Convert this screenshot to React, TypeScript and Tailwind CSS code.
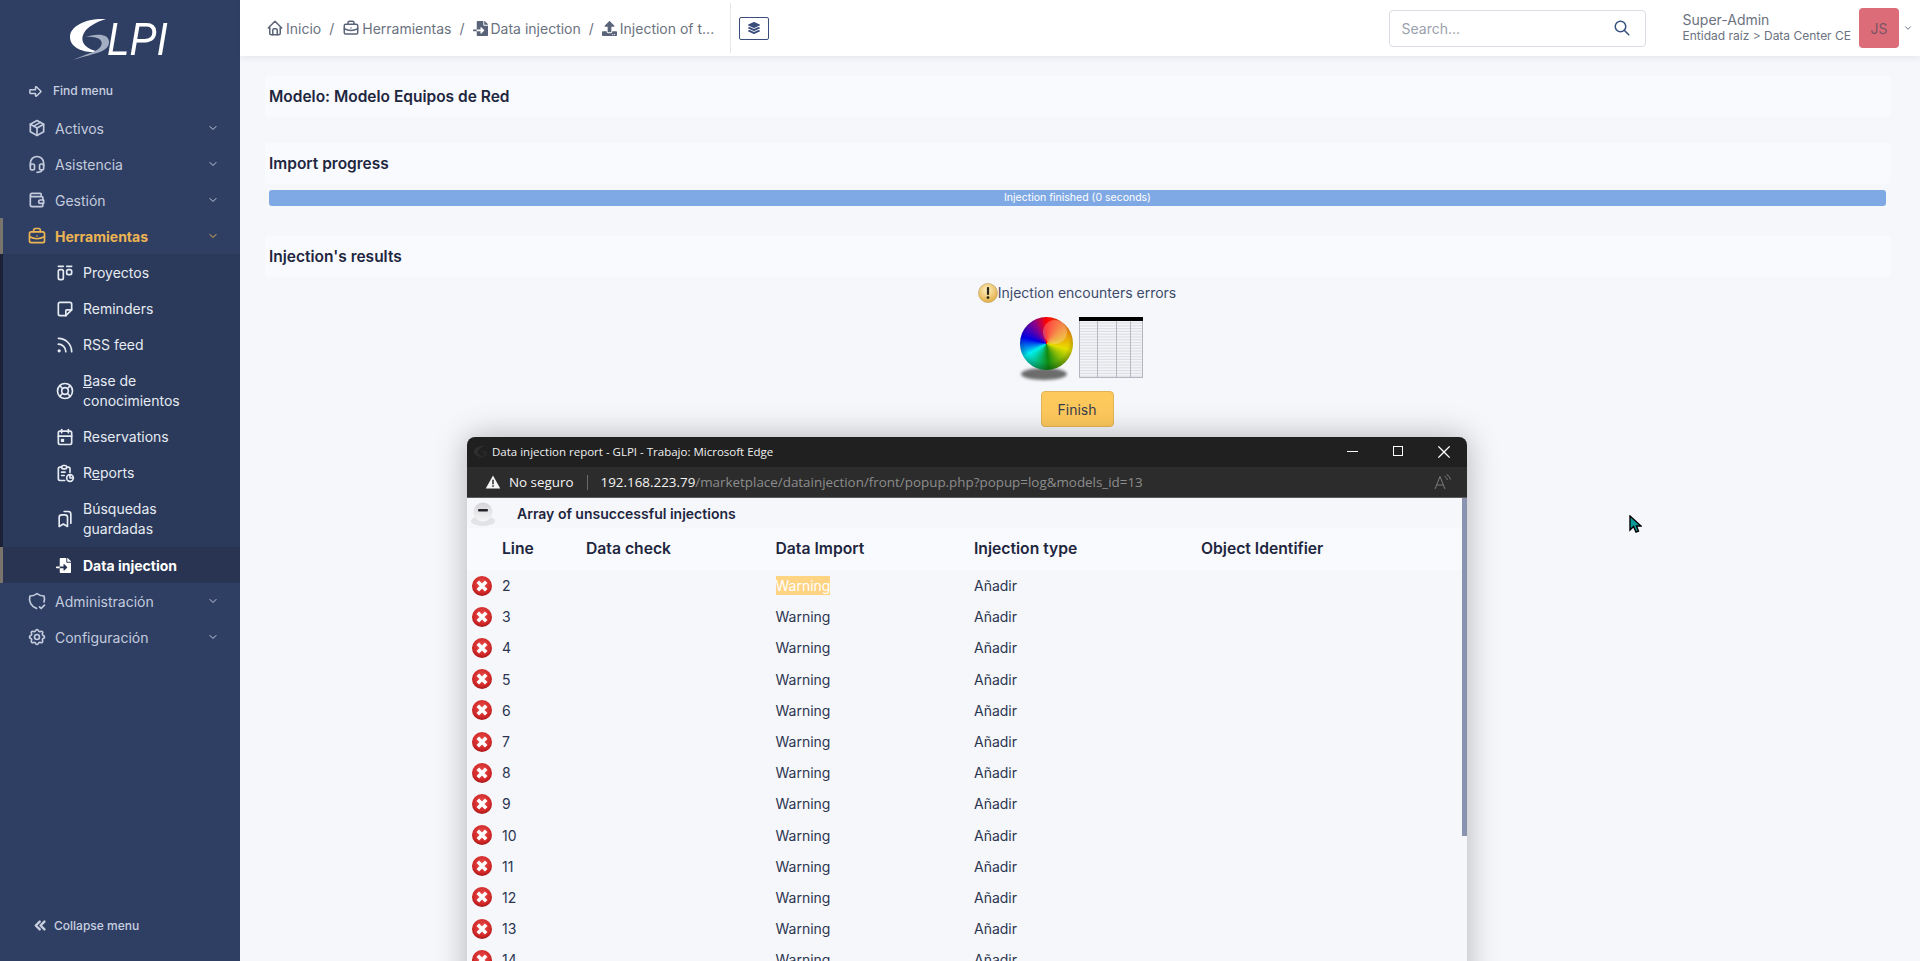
import type { ReactNode } from 'react';
import {
  TbArrowBigRight,
  TbBookmarks,
  TbBriefcase,
  TbCalendarEvent,
  TbChevronDown,
  TbChevronsLeft,
  TbHeadset,
  TbHome,
  TbLayoutKanban,
  TbLifebuoy,
  TbNote,
  TbPackage,
  TbReport,
  TbRss,
  TbSearch,
  TbSettings,
  TbShieldCheck,
  TbWallet,
} from 'react-icons/tb';
import { FaFileImport, FaLayerGroup, FaUpload } from 'react-icons/fa';
import { VscChromeClose, VscChromeMaximize, VscChromeMinimize } from 'react-icons/vsc';

const rows = ['2', '3', '4', '5', '6', '7', '8', '9', '10', '11', '12', '13', '14'];

function GlpiMark({ className, dark }: { className: string; dark?: boolean }) {
  return (
    <svg viewBox="68 18 44 45" className={className}>
      <path
        d="M106 20C86 19 70 27 70 38C70 47 80 53 93 53L101 53C86 51 79 43 84 34C87 28 96 23 106 20Z"
        fill={dark ? '#2e2e2e' : '#ffffff'}
      />
      <path
        d="M73 61C85 55 98 53 101 47C104 41 98 37 85 38C94 35 110 33 109 44C108 54 90 55 73 61Z"
        fill={dark ? '#2a2a2a' : '#a4aec2'}
      />
    </svg>
  );
}

function MenuItem({ icon, label, active }: { icon: ReactNode; label: string; active?: boolean }) {
  return (
    <div className={`flex h-9 items-center pl-[27px] pr-[21px] ${active ? 'font-bold text-[#edb452]' : 'text-[#c3cbdd]'}`}>
      <span className="flex w-[28px] text-[20px]">{icon}</span>
      <span className="flex-1 text-[14px]">{label}</span>
      <TbChevronDown className="text-[12px]" />
    </div>
  );
}

function SubItem({ icon, children }: { icon: ReactNode; children: ReactNode }) {
  return (
    <div className="flex min-h-9 items-center py-[8px] pl-[55px] pr-4 text-[14px] leading-[20px] text-[#e6ebf3]">
      <span className="flex w-[28px] shrink-0 text-[20px]">{icon}</span>
      <span>{children}</span>
    </div>
  );
}

function Sidebar() {
  return (
    <aside className="flex h-full w-[240px] shrink-0 flex-col bg-[#2f3f64]">
      <div className="flex h-[75px] items-start pl-[68px] pt-[17px]">
        <GlpiMark className="h-[45px] w-[44px]" />
        <span className="-ml-[5px] origin-left scale-x-[0.88] font-['Liberation_Sans',sans-serif] text-[46px] italic leading-[44px] text-white">LPI</span>
      </div>
      <div className="flex h-[32px] items-center pl-[28px] text-[12px] font-medium text-[#c8d0e0]">
        <TbArrowBigRight className="mr-[10px] text-[15px]" strokeWidth={2.4} />
        Find menu
      </div>
      <div className="mt-[3px]">
        <MenuItem icon={<TbPackage />} label="Activos" />
        <MenuItem icon={<TbHeadset />} label="Asistencia" />
        <MenuItem icon={<TbWallet />} label="Gestión" />
        <div className="border-l-[3px] border-[#7a756c]">
          <div className="-ml-[3px]">
            <MenuItem icon={<TbBriefcase />} label="Herramientas" active />
          </div>
        </div>
        <div className="border-l-[3px] border-[#1a2138] bg-[#2b3a5a] pt-[1px]">
          <div className="-ml-[3px]">
            <SubItem icon={<TbLayoutKanban />}>Proyectos</SubItem>
            <SubItem icon={<TbNote />}>Reminders</SubItem>
            <SubItem icon={<TbRss />}>RSS feed</SubItem>
            <SubItem icon={<TbLifebuoy />}>
              <u>B</u>ase de conocimientos
            </SubItem>
            <SubItem icon={<TbCalendarEvent />}>Reservations</SubItem>
            <SubItem icon={<TbReport />}>
              R<u>e</u>ports
            </SubItem>
            <SubItem icon={<TbBookmarks />}>Búsquedas guardadas</SubItem>
          </div>
        </div>
        <div className="flex h-9 items-center border-l-[3px] border-[#7a756c] bg-[#283451] pl-[52px] text-[14px] font-bold text-white">
          <FaFileImport className="mr-[11px] w-[17px] text-[15px]" />
          Data injection
        </div>
        <MenuItem icon={<TbShieldCheck />} label="Administración" />
        <MenuItem icon={<TbSettings />} label="Configuración" />
      </div>
      <div className="mt-auto flex items-center pb-[26px] pl-[31px] text-[12px] font-medium text-[#c8d0e0]">
        <TbChevronsLeft className="mr-[4px] text-[19px]" strokeWidth={3} />
        Collapse menu
      </div>
    </aside>
  );
}

function Crumb({ icon, label }: { icon: ReactNode; label: string }) {
  return (
    <span className="flex items-center gap-[2px]">
      <span className="flex text-[18px] text-[#5a6478]">{icon}</span>
      {label}
    </span>
  );
}

function Header() {
  return (
    <header className="relative flex h-14 shrink-0 items-center bg-white pl-[26px] pr-[7px] text-[14px] text-[#6b7280] shadow-[0_2px_6px_rgba(40,50,80,0.08)]">
      <div className="flex items-center gap-[8px]">
        <Crumb icon={<TbHome />} label="Inicio" />
        <span>/</span>
        <Crumb icon={<TbBriefcase />} label="Herramientas" />
        <span>/</span>
        <Crumb icon={<FaFileImport className="mr-[1px] text-[15px]" />} label="Data injection" />
        <span>/</span>
        <Crumb icon={<FaUpload className="mr-[1px] text-[15px]" />} label="Injection of t..." />
      </div>
      <div className="ml-[16px] h-[50px] border-l border-[#e4e7ec]" />
      <div className="ml-[8px] flex h-[23px] w-[30px] items-center justify-center rounded-[2px] border border-[#3a4d7c] text-[12px] text-[#3a4d7c]">
        <FaLayerGroup />
      </div>
      <div className="ml-auto flex h-[37px] w-[257px] items-center justify-between rounded-[4px] border border-[#d9dde5] pl-3 pr-[14px] text-[#9aa1ad]">
        Search...
        <TbSearch className="text-[18px] text-[#35507f]" />
      </div>
      <div className="ml-[37px] flex flex-col leading-[16px]">
        <span className="text-[14px]">Super-Admin</span>
        <span className="text-[12px]">Entidad raíz &gt; Data Center CE</span>
      </div>
      <div className="ml-[8px] flex h-10 w-10 items-center justify-center rounded-[4px] bg-[#db6c78] text-[14px] text-[#7c5566]">JS</div>
      <TbChevronDown className="ml-[4px] text-[10px] text-[#4b5563]" />
    </header>
  );
}

function CardTitle({ children }: { children: ReactNode }) {
  return (
    <div className="flex h-[41px] items-center rounded-[2px] bg-[#f9fafd] px-1 text-[15.5px] font-semibold text-[#1e2640]">{children}</div>
  );
}

function WarningIcon() {
  return (
    <svg viewBox="0 0 20 20" className="h-5 w-5">
      <defs>
        <radialGradient id="warn" cx="45%" cy="35%" r="70%">
          <stop offset="0%" stopColor="#fdf0c4" />
          <stop offset="100%" stopColor="#e2aa3c" />
        </radialGradient>
      </defs>
      <circle cx="10" cy="10" r="9.5" fill="url(#warn)" stroke="#b99a50" strokeWidth="0.6" />
      <rect x="8.9" y="4" width="2.2" height="8" rx="1" fill="#2a2416" />
      <circle cx="10" cy="14.6" r="1.4" fill="#2a2416" />
    </svg>
  );
}

function ColorBall() {
  return (
    <div className="relative h-[64px] w-[64px] shrink-0">
      <div className="absolute bottom-[1px] left-[8px] h-[12px] w-[46px] rounded-[50%] bg-[#6c6c6c] blur-[1.5px]" />
      <div className="absolute left-[7px] top-0 h-[53px] w-[53px] rounded-full bg-[conic-gradient(#ff0000_0deg,#f07a10_50deg,#e6e000_105deg,#108a10_175deg,#00f0f0_240deg,#0000e8_285deg,#8a008a_330deg,#ff0000_360deg)]" />
      <div className="absolute left-[7px] top-0 h-[53px] w-[53px] rounded-full bg-[radial-gradient(circle_at_50%_45%,rgba(0,0,0,0)_55%,rgba(0,0,0,0.6)_100%)]" />
      <div className="absolute left-[30px] top-[3px] h-[24px] w-[24px] rounded-full bg-white/25" />
    </div>
  );
}

function SheetPreview() {
  const ys = Array.from({ length: 20 }, (_, i) => 6 + i * 2.8);
  return (
    <svg viewBox="0 0 64 61" className="h-[61px] w-[64px]">
      <rect width="64" height="61" fill="#f3f4f7" />
      {ys.map((y) => (
        <line key={y} x1="0" x2="64" y1={y} y2={y} stroke="#d4d6dc" strokeWidth="0.8" />
      ))}
      {[0.5, 18.5, 37.5, 51.5, 63.5].map((x) => (
        <line key={x} x1={x} x2={x} y1="0" y2="61" stroke="#b4b7c0" strokeWidth="1" />
      ))}
      <rect width="64" height="4" fill="#000" />
      <line x1="0" x2="64" y1="60.5" y2="60.5" stroke="#b4b7c0" />
    </svg>
  );
}

function ErrorIcon() {
  return (
    <svg viewBox="0 0 20 20" className="h-5 w-5">
      <defs>
        <radialGradient id="err" cx="50%" cy="40%" r="62%">
          <stop offset="0%" stopColor="#ea5050" />
          <stop offset="75%" stopColor="#cf2626" />
          <stop offset="100%" stopColor="#9c1010" />
        </radialGradient>
      </defs>
      <circle cx="10" cy="10" r="10" fill="url(#err)" />
      <path d="M5.8 5.8L14.2 14.2M14.2 5.8L5.8 14.2" stroke="#fff" strokeWidth="3.6" />
    </svg>
  );
}

function DomeIcon() {
  return (
    <svg viewBox="0 0 26 28" className="h-[28px] w-[26px]">
      <defs>
        <linearGradient id="dome" x1="0" y1="0" x2="0" y2="1">
          <stop offset="0%" stopColor="#d4d4d8" />
          <stop offset="100%" stopColor="#f7f7f8" />
        </linearGradient>
      </defs>
      <ellipse cx="13" cy="22" rx="12" ry="5" fill="#e2e3e6" />
      <circle cx="13" cy="13" r="9.5" fill="url(#dome)" />
      <rect x="8" y="10" width="10" height="2.4" rx="1" fill="#26262a" />
    </svg>
  );
}

function ReadAloudIcon() {
  return (
    <svg viewBox="0 0 18 16" fill="none" stroke="#7d7d7d" strokeWidth="1" className="h-4 w-[18px]">
      <path d="M1 15L6 2.5L11 15M2.8 11H9.2" />
      <path d="M10.5 2.5C12 3 13 4.2 13.3 6M12.5 0.8C14.8 1.5 16 3.2 16.3 5.5" />
    </svg>
  );
}

function ReportWindow() {
  return (
    <div className="absolute left-[467px] top-[437px] flex h-[560px] w-[1000px] flex-col overflow-hidden rounded-t-[8px] bg-[#f5f7fb] font-['Inter',sans-serif] shadow-[0_0_32px_rgba(0,0,0,0.28)]">
      <div className="flex h-[30px] shrink-0 items-center bg-[#202020] pl-[6px] font-['Open_Sans',sans-serif] text-[11.5px] text-[#f0f0f0]">
        <GlpiMark className="mr-[4px] h-[15px] w-[15px]" dark />
        Data injection report - GLPI - Trabajo: Microsoft Edge
        <div className="ml-auto flex text-[#ffffff]">
          <span className="flex w-[46px] justify-center text-[16px]">
            <VscChromeMinimize />
          </span>
          <span className="flex w-[46px] justify-center text-[16px]">
            <VscChromeMaximize />
          </span>
          <span className="flex w-[46px] justify-center text-[18px]">
            <VscChromeClose />
          </span>
        </div>
      </div>
      <div className="flex h-[31px] shrink-0 items-center border-b border-[#5c5c5c] bg-[#2c2c2c] pl-[18px] pr-[15px] font-['Open_Sans',sans-serif] text-[13.4px] text-[#f4f4f4]">
        <svg viewBox="0 0 16 15" className="mr-[8px] h-[14px] w-[16px]">
          <path d="M8 0.5L15.8 14.5H0.2Z" fill="#f5f5f5" />
          <rect x="7.2" y="5" width="1.6" height="5" fill="#2c2c2c" />
          <rect x="7.2" y="11" width="1.6" height="1.7" fill="#2c2c2c" />
        </svg>
        No seguro
        <span className="mx-[13px] h-[15px] border-l border-[#6a6a6a]" />
        <span>192.168.223.79</span>
        <span className="text-[#8d8d8d]">/marketplace/datainjection/front/popup.php?popup=log&amp;models_id=13</span>
        <span className="ml-auto">
          <ReadAloudIcon />
        </span>
      </div>
      <div className="flex min-h-0 flex-1">
        <div className="min-w-0 flex-1 text-[14px] text-[#2c3550]">
          <div className="flex h-[30px] items-center font-semibold text-[#1e2640]">
            <span className="ml-[3px] mr-[21px] flex w-[26px]">
              <DomeIcon />
            </span>
            Array of unsuccessful injections
          </div>
          <div className="grid h-[42px] grid-cols-[35px_84px_189.5px_198.5px_227px_1fr] items-center bg-[#f9fafd] text-[15.7px] font-semibold text-[#1e2640]">
            <span />
            <span>Line</span>
            <span>Data check</span>
            <span>Data Import</span>
            <span>Injection type</span>
            <span>Object Identifier</span>
          </div>
          {rows.map((line, i) => (
            <div key={line} className="grid h-[31.2px] grid-cols-[35px_84px_189.5px_198.5px_227px_1fr] items-center">
              <span className="pl-[5px]">
                <ErrorIcon />
              </span>
              <span>{line}</span>
              <span />
              <span>
                {i === 0 ? <span className="bg-[#fed382] py-[1px] text-white">Warning</span> : 'Warning'}
              </span>
              <span>Añadir</span>
              <span />
            </div>
          ))}
        </div>
        <div className="w-[5px] shrink-0">
          <div className="h-[338px] bg-[#8a93b0]" />
        </div>
      </div>
    </div>
  );
}

export default function App() {
  return (
    <div className="relative flex h-[961px] w-[1920px] overflow-hidden bg-[#f5f7fb] font-['Inter',sans-serif]">
      <Sidebar />
      <main className="flex min-w-0 flex-1 flex-col">
        <Header />
        <div className="flex flex-col pl-[24px] pr-[30px] pt-[20px]">
          <div className="pl-[1px]">
            <CardTitle>Modelo: Modelo Equipos de Red</CardTitle>
          </div>
          <div className="mt-[26px] pl-[1px]">
            <CardTitle>Import progress</CardTitle>
          </div>
          <div className="ml-[5px] mr-[4px] mt-[6px] flex h-4 items-center justify-center rounded-[3px] bg-[#7fa9e4] text-[10.5px] text-white">
            Injection finished (0 seconds)
          </div>
          <div className="mt-[30px] pl-[1px]">
            <CardTitle>Injection's results</CardTitle>
          </div>
          <div className="mt-[6px] flex flex-col items-center">
            <div className="flex items-center text-[14px] leading-5 text-[#3d4b6b]">
              <WarningIcon />
              Injection encounters errors
            </div>
            <div className="ml-[2px] mt-[14px] flex items-start gap-[2px]">
              <ColorBall />
              <SheetPreview />
            </div>
            <button className="mt-[10px] h-[36px] w-[73px] rounded-[4px] border border-[#e2b457] bg-[#fec95c] text-[14px] text-[#3a3d4e]">
              Finish
            </button>
          </div>
        </div>
      </main>
      <ReportWindow />
      <svg viewBox="0 0 13 20" className="absolute left-[1629px] top-[515px] h-[20px] w-[13px]">
        <path d="M1 1V15L4.5 11.5L7 17L9.5 16L7.5 11H12Z" fill="#0a9a9a" stroke="#000" strokeWidth="1.4" />
      </svg>
    </div>
  );
}
